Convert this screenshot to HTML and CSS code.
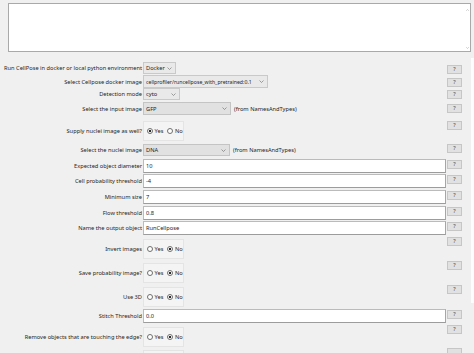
FILE: index.html
```html
<!DOCTYPE html>
<html>
<head>
<meta charset="utf-8">
<link rel="stylesheet" href="styles.css">
</head>
<body>
<div class="log">
  <div class="log-scroll">
    <svg class="arr" viewBox="0 0 6 4"><polyline points="0.5,3.5 3,1 5.5,3.5"/></svg>
    <svg class="arr" viewBox="0 0 6 4"><polyline points="0.5,0.5 3,3 5.5,0.5"/></svg>
  </div>
</div>
<div class="main">
  <div class="panel">
    <div class="row r-sel1">
      <div class="lbl">Run CellPose in docker or local python environment</div>
      <div class="ctl"><div class="sel w-docker"><span>Docker</span><svg class="chev" viewBox="0 0 10 6"><polyline points="1,1 5,5 9,1"/></svg></div></div>
      <div class="help">?</div>
    </div>
    <div class="row r-sel2">
      <div class="lbl">Select Cellpose docker image</div>
      <div class="ctl"><div class="sel w-image"><span class="long">cellprofiler/runcellpose_with_pretrained:0.1</span><svg class="chev" viewBox="0 0 10 6"><polyline points="1,1 5,5 9,1"/></svg></div></div>
      <div class="help">?</div>
    </div>
    <div class="row r-sel3">
      <div class="lbl">Detection mode</div>
      <div class="ctl"><div class="sel w-cyto"><span>cyto</span><svg class="chev" viewBox="0 0 10 6"><polyline points="1,1 5,5 9,1"/></svg></div></div>
      <div class="help">?</div>
    </div>
    <div class="row r-sel4">
      <div class="lbl">Select the input image</div>
      <div class="ctl"><div class="sel dark w-gfp"><span>GFP</span><svg class="chev" viewBox="0 0 10 6"><polyline points="1,1 5,5 9,1"/></svg></div><span class="note">(from NamesAndTypes)</span></div>
      <div class="help">?</div>
    </div>
    <div class="row r-radio26">
      <div class="lbl">Supply nuclei image as well?</div>
      <div class="ctl"><div class="radios"><span class="rad on"></span><span class="opt">Yes</span><span class="rad"></span><span class="opt">No</span></div></div>
      <div class="help">?</div>
    </div>
    <div class="row r-sel6">
      <div class="lbl">Select the nuclei image</div>
      <div class="ctl"><div class="sel dark w-dna"><span>DNA</span><svg class="chev" viewBox="0 0 10 6"><polyline points="1,1 5,5 9,1"/></svg></div><span class="note">(from NamesAndTypes)</span></div>
      <div class="help">?</div>
    </div>
    <div class="row r-text15">
      <div class="lbl">Expected object diameter</div>
      <div class="ctl"><div class="txt">10</div></div>
      <div class="help">?</div>
    </div>
    <div class="row r-text16">
      <div class="lbl">Cell probability threshold</div>
      <div class="ctl"><div class="txt">-4</div></div>
      <div class="help">?</div>
    </div>
    <div class="row r-text16">
      <div class="lbl">Minimum size</div>
      <div class="ctl"><div class="txt">7</div></div>
      <div class="help">?</div>
    </div>
    <div class="row r-text15">
      <div class="lbl">Flow threshold</div>
      <div class="ctl"><div class="txt">0.8</div></div>
      <div class="help">?</div>
    </div>
    <div class="row r-text15">
      <div class="lbl">Name the output object</div>
      <div class="ctl"><div class="txt">RunCellpose</div></div>
      <div class="help">?</div>
    </div>
    <div class="row r-radio24">
      <div class="lbl">Invert images</div>
      <div class="ctl"><div class="radios"><span class="rad"></span><span class="opt">Yes</span><span class="rad on"></span><span class="opt">No</span></div></div>
      <div class="help">?</div>
    </div>
    <div class="row r-radio24">
      <div class="lbl">Save probability image?</div>
      <div class="ctl"><div class="radios"><span class="rad"></span><span class="opt">Yes</span><span class="rad on"></span><span class="opt">No</span></div></div>
      <div class="help">?</div>
    </div>
    <div class="row r-radio25">
      <div class="lbl">Use 3D</div>
      <div class="ctl"><div class="radios"><span class="rad"></span><span class="opt">Yes</span><span class="rad on"></span><span class="opt">No</span></div></div>
      <div class="help">?</div>
    </div>
    <div class="row r-text15">
      <div class="lbl">Stitch Threshold</div>
      <div class="ctl"><div class="txt">0.0</div></div>
      <div class="help">?</div>
    </div>
    <div class="row r-radio23">
      <div class="lbl">Remove objects that are touching the edge?</div>
      <div class="ctl"><div class="radios"><span class="rad"></span><span class="opt">Yes</span><span class="rad on"></span><span class="opt">No</span></div></div>
      <div class="help">?</div>
    </div>
    <div class="row r-radio24">
      <div class="lbl"></div>
      <div class="ctl"><div class="radios"></div></div>
      <div class="help"></div>
    </div>
  </div>
  <div class="vscroll"><div class="thumb"></div></div>
</div>
</body>
</html>
```

FILE: styles.css
```css
* { box-sizing: border-box; }
html, body {
  margin: 0;
  width: 474px;
  height: 353px;
  overflow: hidden;
  background: #f0f0f0;
}
body {
  font-family: "Noto Sans", "Liberation Sans", sans-serif;
  font-size: 5.7px;
  color: #1e1e1e;
}
.log {
  margin: 3px 3px 0 8px;
  height: 49px;
  background: #fff;
  border: 1px solid #a9a9a9;
  display: flex;
  justify-content: flex-end;
}
.log-scroll {
  width: 4px;
  display: flex;
  flex-direction: column;
  justify-content: space-between;
  padding: 5px 0 2px;
}
.arr { width: 3px; height: 2px; display: block; }
.arr polyline { fill: none; stroke: #a8a8a8; stroke-width: 1.2; }

.main { display: flex; margin-top: 3px; }
.panel { width: 471px; padding-top: 7px; }
.vscroll { width: 3px; }
.thumb { margin-top: 3px; height: 245px; background: #fdfdfd; }

.row {
  display: grid;
  grid-template-columns: 143px 304px 15px;
  align-items: start;
  --mt: 0px;
  --ch: 12px;
  --hm: 3px;
}
.r-sel1 { height: 13px; --ch: 12px; --hm: 3px; }
.r-sel2 { height: 13px; --ch: 13px; --hm: 3px; }
.r-sel3 { height: 13px; --ch: 12px; --hm: 2px; }
.r-sel4 { height: 16px; --mt: 1px; --ch: 13px; --hm: 3px; }
.r-sel6 { height: 16px; --mt: 1px; --ch: 12px; --hm: 1px; }
.r-radio26 { height: 26px; --mt: 4px; --ch: 20px; --hm: 4px; }
.r-radio24 { height: 24px; --mt: 3px; --ch: 20px; --hm: 1px; }
.r-radio25 { height: 25px; --mt: 3px; --ch: 20px; --hm: 1px; }
.r-radio23 { height: 23px; --mt: 3px; --ch: 20px; --hm: 1px; }
.r-text15 { height: 15px; --mt: 0px; --ch: 14px; --hm: 1px; }
.r-text16 { height: 16px; --mt: 0px; --ch: 14px; --hm: 1px; }

.lbl {
  margin-top: var(--mt);
  height: var(--ch);
  display: flex;
  align-items: center;
  justify-content: flex-end;
  padding-right: 1px;
  white-space: nowrap;
}
.ctl {
  margin-top: var(--mt);
  height: var(--ch);
  display: flex;
  align-items: stretch;
  gap: 3px;
}
.help {
  margin-top: var(--hm);
  width: 15px;
  height: 9px;
  background: #e1e1e1;
  border: 1px solid #c6c6c6;
  display: flex;
  align-items: center;
  justify-content: center;
  font-size: 5.5px;
  color: #444;
  line-height: 1;
}

.sel {
  display: flex;
  align-items: center;
  justify-content: space-between;
  padding: 0 3px 0 2px;
  background: #e9e9e9;
  border: 1px solid #c9c9c9;
  white-space: nowrap;
}
.sel.dark { background: #e1e1e1; border-color: #c4c4c4; }
.long { font-size: 5.2px; }
.chev { width: 5px; height: 3px; display: block; flex: none; }
.chev polyline { fill: none; stroke: #707070; stroke-width: 1.3; }
.w-docker { width: 33px; }
.w-image { width: 125px; }
.w-cyto { width: 37px; }
.w-gfp { width: 88px; }
.w-dna { width: 87px; }
.note { display: flex; align-items: center; white-space: nowrap; }

.txt {
  width: 303px;
  background: #fff;
  border: 1px solid #bbbbbb;
  border-bottom-color: #9c9c9c;
  border-right-color: #a6a6a6;
  display: flex;
  align-items: center;
  padding-left: 2px;
  white-space: nowrap;
}

.radios {
  width: 41px;
  display: flex;
  align-items: center;
  padding-left: 3px;
  background: #f4f4f4;
  border: 1px solid #e4e4e4;
}
.rad {
  width: 6px;
  height: 6px;
  border-radius: 50%;
  border: 1px solid #6f6f6f;
  background: #fff;
  flex: none;
}
.rad.on { background: radial-gradient(circle, #2a2a2a 0 1.2px, #fff 1.6px); }
.opt { margin: 0 4px 0 1.5px; }
```
